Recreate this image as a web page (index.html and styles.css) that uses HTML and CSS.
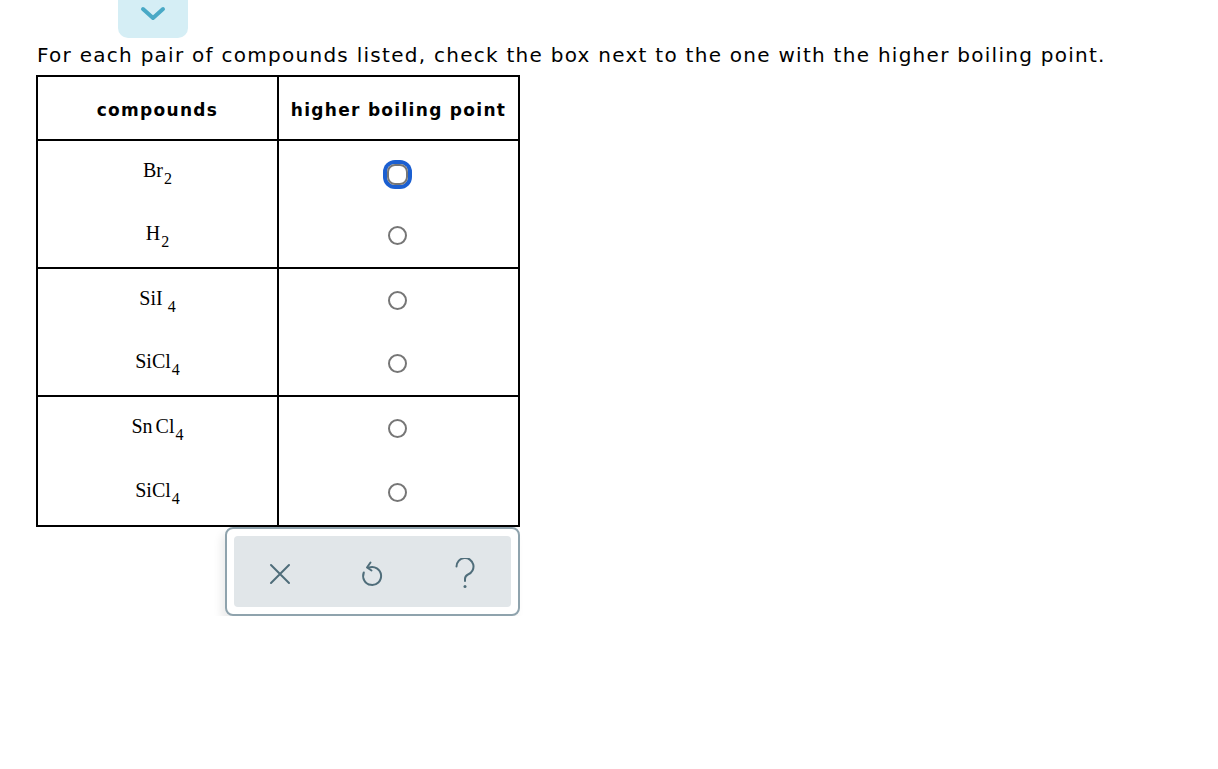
FILE: index.html
```html
<!DOCTYPE html>
<html>
<head>
<meta charset="utf-8">
<link rel="stylesheet" href="styles.css">
</head>
<body>
<div class="page">
  <div class="tab">
    <svg width="26" height="16" viewBox="0 0 26 16"><path d="M3 3 L13 12 L23 3" fill="none" stroke="#49a9c6" stroke-width="4" stroke-linecap="round" stroke-linejoin="round"/></svg>
  </div>
  <p class="prompt">For each pair of compounds listed, check the box next to the one with the higher boiling point.</p>
  <table class="grid">
    <thead>
      <tr><th class="c1">compounds</th><th class="c2">higher boiling point</th></tr>
    </thead>
    <tbody>
      <tr>
        <td><div class="item">Br<sub>2</sub></div><div class="item">H<sub>2</sub></div></td>
        <td><div class="item"><span class="radio focus"></span></div><div class="item"><span class="radio"></span></div></td>
      </tr>
      <tr>
        <td><div class="item">SiI<sub class="gap">4</sub></div><div class="item">SiCl<sub>4</sub></div></td>
        <td><div class="item"><span class="radio"></span></div><div class="item"><span class="radio"></span></div></td>
      </tr>
      <tr class="last">
        <td><div class="item">Sn<span class="thin"></span>Cl<sub>4</sub></div><div class="item">SiCl<sub>4</sub></div></td>
        <td><div class="item"><span class="radio"></span></div><div class="item"><span class="radio"></span></div></td>
      </tr>
    </tbody>
  </table>
  <div class="toolbar">
    <div class="tools">
      <div class="tool">
        <svg width="22" height="22" viewBox="0 0 22 22"><path d="M2 2 L20 20 M20 2 L2 20" stroke="#4f6d7a" stroke-width="2" fill="none" stroke-linecap="round"/></svg>
      </div>
      <div class="tool">
        <svg width="24" height="28" viewBox="0 0 24 28"><path d="M9 7.5 A9 9 0 1 1 3.8 12.5" fill="none" stroke="#4f6d7a" stroke-width="2" stroke-linecap="round"/><path d="M10.5 2.5 L7 7.5 L11.5 10.5" fill="none" stroke="#4f6d7a" stroke-width="2" stroke-linecap="round" stroke-linejoin="round"/></svg>
      </div>
      <div class="tool">
        <svg width="22" height="32" viewBox="0 0 22 32"><path d="M2.5 8.5 A8.5 8.5 0 1 1 14 16.5 Q11 17.8 11 21 L11 23" fill="none" stroke="#4f6d7a" stroke-width="2" stroke-linecap="round"/><circle cx="11" cy="28.5" r="1.5" fill="#4f6d7a"/></svg>
      </div>
    </div>
  </div>
</div>
</body>
</html>
```
FILE: styles.css
```css
html, body {
  margin: 0;
  padding: 0;
  background: #fff;
}
.page {
  padding: 0 0 0 36px;
  font-family: "DejaVu Sans", Verdana, sans-serif;
  color: #000;
}
.tab {
  margin-left: 82px;
  width: 70px;
  height: 38px;
  background: #d5eef5;
  border-radius: 0 0 10px 10px;
  display: flex;
  justify-content: center;
  align-items: flex-start;
  box-sizing: border-box;
}
.tab svg {
  margin-top: 6px;
}
.prompt {
  margin: 3px 0 0 1px;
  font-size: 20px;
  letter-spacing: 1.27px;
  line-height: 28px;
  height: 34px;
  white-space: nowrap;
}
.grid {
  border-collapse: collapse;
  border: 2px solid #000;
  width: 484px;
  table-layout: fixed;
}
.grid th, .grid td {
  border: 2px solid #000;
  padding: 0;
  text-align: center;
  vertical-align: top;
}
.grid th {
  height: 58px;
  padding-top: 4px;
  font-size: 17px;
  letter-spacing: 1.3px;
  font-weight: bold;
  vertical-align: middle;
  white-space: nowrap;
}
.grid .c1 {
  width: 239px;
}
.item {
  height: 63px;
  display: flex;
  justify-content: center;
  align-items: center;
  font-family: "Liberation Serif", "Times New Roman", serif;
  font-size: 20px;
}
.item sub {
  font-size: 16px;
  position: relative;
  top: 9px;
  vertical-align: baseline;
  margin-left: 1px;
  line-height: 1;
}
.grid td:first-child .item {
  padding-bottom: 5px;
  box-sizing: border-box;
}
.item sub.gap {
  margin-left: 5px;
}
.thin {
  display: inline-block;
  width: 3px;
}
.last .item:last-child {
  height: 65px;
}
.radio {
  display: block;
  width: 19px;
  height: 19px;
  border: 2px solid #767676;
  border-radius: 50%;
  box-sizing: border-box;
  position: relative;
  left: -1px;
}
.radio.focus {
  width: 21px;
  height: 21px;
  box-shadow: 0 0 0 4px #1b5fd1;
  border-radius: 8px;
  margin-top: 3px;
}
.toolbar {
  margin: 0 0 0 189px;
  width: 295px;
  height: 89px;
  border: 2px solid #8fa3ad;
  border-radius: 8px;
  box-sizing: border-box;
  padding: 7px;
  background: #fff;
  box-shadow: -4px 6px 8px rgba(0, 0, 0, 0.08);
}
.tools {
  height: 100%;
  background: #e1e6e9;
  border-radius: 4px;
  display: grid;
  grid-template-columns: repeat(3, 1fr);
  align-items: center;
  justify-items: center;
}
.tool {
  display: flex;
  align-items: center;
  justify-content: center;
  padding-top: 4px;
}
```
